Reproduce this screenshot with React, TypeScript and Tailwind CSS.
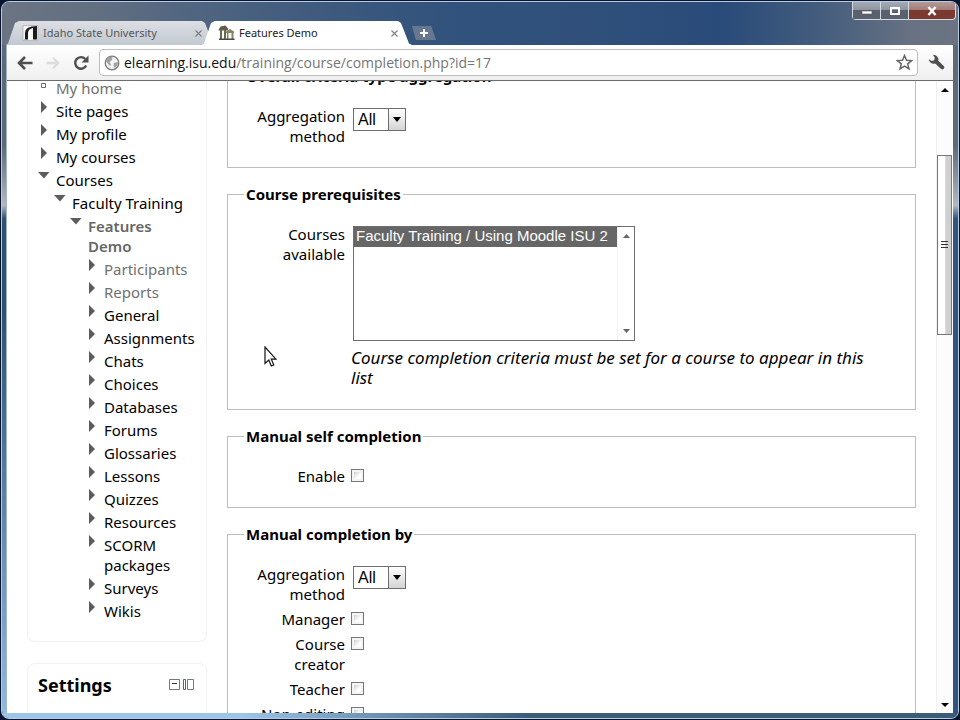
import { useState } from "react";
import type { ReactNode } from "react";

const NAV = [
  { label: "My home", level: 0, kind: "leaf", tone: "dim" },
  { label: "Site pages", level: 0, kind: "closed", tone: "normal" },
  { label: "My profile", level: 0, kind: "closed", tone: "normal" },
  { label: "My courses", level: 0, kind: "closed", tone: "normal" },
  { label: "Courses", level: 0, kind: "open", tone: "normal" },
  { label: "Faculty Training", level: 1, kind: "open", tone: "normal" },
  { label: "Features Demo", level: 2, kind: "open", tone: "current" },
  { label: "Participants", level: 3, kind: "closed", tone: "dim" },
  { label: "Reports", level: 3, kind: "closed", tone: "dim" },
  { label: "General", level: 3, kind: "closed", tone: "normal" },
  { label: "Assignments", level: 3, kind: "closed", tone: "normal" },
  { label: "Chats", level: 3, kind: "closed", tone: "normal" },
  { label: "Choices", level: 3, kind: "closed", tone: "normal" },
  { label: "Databases", level: 3, kind: "closed", tone: "normal" },
  { label: "Forums", level: 3, kind: "closed", tone: "normal" },
  { label: "Glossaries", level: 3, kind: "closed", tone: "normal" },
  { label: "Lessons", level: 3, kind: "closed", tone: "normal" },
  { label: "Quizzes", level: 3, kind: "closed", tone: "normal" },
  { label: "Resources", level: 3, kind: "closed", tone: "normal" },
  { label: "SCORM packages", level: 3, kind: "closed", tone: "normal" },
  { label: "Surveys", level: 3, kind: "closed", tone: "normal" },
  { label: "Wikis", level: 3, kind: "closed", tone: "normal" },
];

const INDENT = ["pl-2.5", "pl-[26px]", "pl-[42px]", "pl-[58px]"];

const TONE: Record<string, string> = {
  normal: "text-black",
  dim: "text-[#707070]",
  current: "text-[#666] font-semibold",
};

function Marker({ kind }: { kind: string }) {
  return (
    <svg width="12" height="12" viewBox="0 0 12 12" className="shrink-0 mr-1.5" fill="#5c5c5c">
      {kind === "closed" && <path d="M3 0v12L9 6z" />}
      {kind === "open" && <path d="M0 2h11.500L6 8.500z" />}
      {kind === "leaf" && <path d="M3.500 5.500h4v4h-4z" fill="#fff" stroke="#6a6a6a" />}
    </svg>
  );
}

function Tab({ title, active, icon }: { title: string; active?: boolean; icon: ReactNode }) {
  return (
    <div
      className={`flex h-6 w-[210px] items-center pl-4 pr-3 [clip-path:polygon(0_100%,2px_94%,9px_8%,13px_0,196px_0,199px_8%,207px_94%,100%_100%)] ${
        active ? "z-10 -ml-[14px] bg-white text-[#222]" : "bg-linear-to-b from-[#dcdfe4] to-[#c3c9d1] text-[#555]"
      }`}
    >
      {icon}
      <span className="ml-1 flex-1 whitespace-nowrap text-[11px]">{title}</span>
      <button aria-label={`Close ${title}`} className="grid size-3 place-items-center">
        <svg width="7" height="7" viewBox="0 0 7 7" stroke="#808080" strokeWidth="1.2">
          <path d="M0.5 0.5l6 6M6.5 0.5l-6 6" />
        </svg>
      </button>
    </div>
  );
}

function TitleBar() {
  return (
    <header className="flex h-[43px] items-start justify-between">
      <div className="flex items-center self-end pl-1">
        <Tab
          title="Idaho State University"
          icon={
            <svg width="17" height="16" viewBox="0 0 17 16">
              <path d="M1 0.5h15v15H1z" fill="#f4f4f4" stroke="#bbb" />
              <path d="M2 14.500h4V8Q6 4 11 3v11.500h4V1Q3 1 3 8v6z" fill="#1c1c1c" />
              <path d="M7 14V8q0-2 2-3v9z" fill="#fff" />
            </svg>
          }
        />
        <Tab
          active
          title="Features Demo"
          icon={
            <svg width="17" height="16" viewBox="0 0 17 16">
              <path d="M0.500 5l2-3.500 5-1L10 3.500v2H0.500z" fill="#5f5d4a" />
              <path d="M2 5h2v9H2zM6 5h2v9H6z" fill="#6b684f" />
              <path d="M8 6.500L12 4l4 2.500V8H8z" fill="#8a8362" />
              <path d="M9 8h1.500v6H9zM13.500 8h2v6h-2z" fill="#8a8362" />
              <path d="M1 13.500h15.500v1.500H1z" fill="#4a4a3c" />
            </svg>
          }
        />
        <button
          aria-label="New tab"
          className="grid h-[14px] w-6 place-items-center bg-[#66788f] [clip-path:polygon(0_0,80%_0,100%_100%,16%_100%)]"
        >
          <svg width="10" height="10" viewBox="0 0 10 10" stroke="#fff" strokeWidth="2">
            <path d="M5 1v8M1 5h8" />
          </svg>
        </button>
      </div>
      <div className="mr-0.5 flex h-[18px] rounded-b border border-t-0 border-[#d5dae2]">
        <button
          aria-label="Minimize"
          className="grid w-7 place-items-center border-r border-[#d5dae2] bg-linear-to-b from-[#a5abb5] via-[#8d939e] via-50% to-[#59616e] to-50%"
        >
          <svg width="12" height="10" viewBox="0 0 12 10">
            <path d="M1 5h10v3H1z" fill="#fff" stroke="#555" strokeWidth="0.6" />
          </svg>
        </button>
        <button
          aria-label="Maximize"
          className="grid w-7 place-items-center border-r border-[#d5dae2] bg-linear-to-b from-[#a5abb5] via-[#8d939e] via-50% to-[#59616e] to-50%"
        >
          <svg width="12" height="10" viewBox="0 0 12 10" fill="none" stroke="#fff" strokeWidth="2">
            <path d="M2 2h8v6H2z" />
          </svg>
        </button>
        <button
          aria-label="Close"
          className="grid w-[46px] place-items-center rounded-br bg-linear-to-b from-[#b59a98] via-[#a07a76] via-50% to-[#7a3a30] to-50%"
        >
          <svg width="12" height="10" viewBox="0 0 12 10" stroke="#fff" strokeWidth="2.4">
            <path d="M2.5 1l7 8M9.5 1l-7 8" />
          </svg>
        </button>
      </div>
    </header>
  );
}

function Toolbar() {
  return (
    <div className="flex h-9 shrink-0 items-center border-b border-[#6b6b6b] bg-linear-to-b from-white to-[#efefef] pl-2 pr-2">
      <button aria-label="Back" className="grid w-5 place-items-center">
        <svg width="16" height="14" viewBox="0 0 16 14" fill="none" stroke="#4f4f4f" strokeWidth="2.6">
          <path d="M15.5 7H2.5M8 1L2 7l6 6" />
        </svg>
      </button>
      <button aria-label="Forward" className="ml-2 grid w-5 place-items-center">
        <svg width="14" height="14" viewBox="0 0 16 14" fill="none" stroke="#dcdcdc" strokeWidth="2.6">
          <path d="M0.5 7h13M8 1l6 6-6 6" />
        </svg>
      </button>
      <button aria-label="Reload" className="ml-2 grid w-5 place-items-center">
        <svg width="16" height="16" viewBox="0 0 16 16" fill="none" stroke="#4f4f4f" strokeWidth="2.4">
          <path d="M13.2 10.5A5.8 5.8 0 1 1 12.3 4" />
          <path d="M15.5 0.5v7h-7z" fill="#4f4f4f" stroke="none" />
        </svg>
      </button>
      <div className="ml-2 flex h-[27px] flex-1 items-center rounded border border-[#bdbdbd] bg-white px-1">
        <svg width="16" height="16" viewBox="0 0 16 16" className="shrink-0">
          <circle cx="8" cy="8" r="6.8" fill="#f4f4f4" stroke="#7b7b7b" strokeWidth="1.3" />
          <path d="M3 3.5q3-2.5 5.500-1.500L8 5 5.500 7 7 9.500 6 11 2 6.500zM10 8l3.500-1 0.500 2-3 4-1.500-2z" fill="#a2a2a2" />
        </svg>
        <div className="ml-1 flex-1 whitespace-nowrap font-['Open_Sans',sans-serif] text-[14px] text-[#757575]">
          <span className="text-[#111]">elearning.isu.edu</span>/training/course/completion.php?id=17
        </div>
        <button aria-label="Bookmark this page">
          <svg width="17" height="17" viewBox="0 0 17 17" fill="#fff" stroke="#666" strokeWidth="1.500">
            <path d="M8.500 1.500l2 4.700 5.200 0.400-4 3.300 1.300 5.100-4.500-2.800-4.500 2.800 1.300-5.100-4-3.300 5.200-0.400z" />
          </svg>
        </button>
      </div>
      <button aria-label="Customize and control" className="ml-2.5">
        <svg width="17" height="17" viewBox="0 0 17 17">
          <path
            d="M5 0.800a5 5 0 0 1 5.300 6L16 12.200q0.900 1.200-0.300 2.500t-2.600 0.300L7.200 9.500A5 5 0 0 1 0.700 5.300l3 1.700 2.500-0.800 0.600-2.500z"
            fill="#4f4f4f"
          />
        </svg>
      </button>
    </div>
  );
}

function Sidebar() {
  return (
    <aside className="w-[180px] shrink-0">
      <nav className="rounded-b-lg border border-t-0 border-[#f1f1f1] pb-[17px]">
        <ul>
          {NAV.map((n) => (
            <li key={n.label} className={`mb-[3px] flex pr-3 ${INDENT[n.level]}`}>
              <Marker kind={n.kind} />
              <a href="#" className={TONE[n.tone]}>
                {n.label}
              </a>
            </li>
          ))}
        </ul>
      </nav>
      <section className="mt-[21px] flex h-24 items-start justify-between rounded-t-lg border border-[#f1f1f1] py-[7px] pl-2.5 pr-3">
        <h2 className="text-[18px] leading-7 font-bold">Settings</h2>
        <div className="mt-2 flex gap-[3px]">
          <button aria-label="Hide Settings block">
            <svg width="11" height="11" viewBox="0 0 11 11" fill="none" stroke="#777">
              <path d="M0.500 0.500h10v10H0.500z" />
              <path d="M3 4.500h5" stroke="#333" />
            </svg>
          </button>
          <button aria-label="Dock Settings block">
            <svg width="11" height="11" viewBox="0 0 11 11" fill="none">
              <path d="M0.500 0.500h2v10h-2z" stroke="#3d7285" />
              <path d="M4.500 0.500h6v10h-6z" stroke="#777" />
            </svg>
          </button>
        </div>
      </section>
    </aside>
  );
}

function Group({ title, children }: { title: string; children: ReactNode }) {
  return (
    <fieldset className="mb-4 border border-[#bdbdbd] px-4 pt-5 pb-4">
      <legend className="px-0.5 font-bold">{title}</legend>
      {children}
    </fieldset>
  );
}

function Row({ id, label, children }: { id: string; label: string; children: ReactNode }) {
  return (
    <div className="mb-[5px] flex items-start">
      <label htmlFor={id} className="mr-1.5 w-[101px] shrink-0 text-right">
        {label}
      </label>
      {children}
    </div>
  );
}

function MethodSelect({ id }: { id: string }) {
  return (
    <div className="relative mt-0.5 ml-0.5">
      <select
        id={id}
        className="block h-[23px] w-[53px] appearance-none border border-[#6e6e6e] bg-white pl-1 font-['Liberation_Sans',sans-serif] text-[16px] leading-5"
      >
        <option>All</option>
        <option>Any</option>
      </select>
      <span className="pointer-events-none absolute inset-y-0 right-0 grid w-[18px] place-items-center border border-[#6e6e6e] bg-linear-to-b from-white to-[#d4d4d4]">
        <svg width="8" height="5" viewBox="0 0 8 5">
          <path d="M0 0h8L4 5z" />
        </svg>
      </span>
    </div>
  );
}

function Check({ id, label }: { id: string; label: string }) {
  return (
    <Row id={id} label={label}>
      <input
        id={id}
        type="checkbox"
        className="mt-[3px] size-[13px] appearance-none border border-[#777] bg-linear-to-br from-[#bbb] to-white to-60% shadow-[inset_0_0_0_2px_#f4f4f4] checked:from-[#555]"
      />
    </Row>
  );
}

function CompletionForm() {
  const [picked, setPicked] = useState(["using-moodle"]);
  return (
    <form className="-mt-[15px] mr-5 ml-5 min-w-0 flex-1">
      <Group title="Overall criteria type aggregation">
        <Row id="overall" label="Aggregation method">
          <MethodSelect id="overall" />
        </Row>
      </Group>
      <Group title="Course prerequisites">
        <Row id="courses" label="Courses available">
          <div className="min-w-0 flex-1">
            <div className="mt-0.5 ml-0.5 flex h-[115px] w-[282px] border border-[#6e6e6e] bg-white">
              <select
                id="courses"
                multiple
                value={picked}
                onChange={(e) => setPicked(Array.from(e.target.selectedOptions, (o) => o.value))}
                className="flex-1 appearance-none overflow-hidden font-['Liberation_Sans',sans-serif] text-[15px] outline-none"
              >
                <option
                  value="using-moodle"
                  className="h-5 px-0.5 py-0 leading-5 checked:bg-linear-to-r checked:from-[#666] checked:to-[#666] checked:[-webkit-text-fill-color:#fff]"
                >
                  Faculty Training / Using Moodle ISU 2
                </option>
              </select>
              <div className="flex w-[17px] flex-col items-center justify-between border-l border-[#f2f2f2] py-[7px]">
                <svg width="7" height="4" viewBox="0 0 7 4" fill="#666">
                  <path d="M0 4h7L3.500 0z" />
                </svg>
                <svg width="7" height="4" viewBox="0 0 7 4" fill="#666">
                  <path d="M0 0h7L3.500 4z" />
                </svg>
              </div>
            </div>
            <p className="mt-[7px] max-w-[520px] text-[17px] leading-5 italic">
              Course completion criteria must be set for a course to appear in this list
            </p>
          </div>
        </Row>
      </Group>
      <Group title="Manual self completion">
        <Check id="self" label="Enable" />
      </Group>
      <Group title="Manual completion by">
        <Row id="roles" label="Aggregation method">
          <MethodSelect id="roles" />
        </Row>
        <Check id="manager" label="Manager" />
        <Check id="creator" label="Course creator" />
        <Check id="teacher" label="Teacher" />
        <Check id="nonediting" label="Non-editing teacher" />
      </Group>
    </form>
  );
}

function PageScrollbar() {
  return (
    <div className="flex w-[17px] shrink-0 flex-col items-center border-l border-[#efefef] bg-[#fcfcfc] pt-[7px] pb-1.5">
      <svg width="8" height="4" viewBox="0 0 8 4">
        <path d="M0 4h8L4 0z" />
      </svg>
      <div className="mt-[63px] mr-0.5 grid h-[180px] w-[15px] place-items-center border border-[#777] bg-linear-to-r from-white from-50% to-[#cfcfcf] to-60%">
        <svg width="7" height="8" viewBox="0 0 7 8" stroke="#333">
          <path d="M0 0.500h7M0 3.500h7M0 6.500h7" />
        </svg>
      </div>
      <svg width="8" height="4" viewBox="0 0 8 4" className="mt-auto">
        <path d="M0 0h8L4 4z" />
      </svg>
    </div>
  );
}

export default function App() {
  return (
    <div className="relative flex h-screen flex-col bg-[#081430] p-px font-['Noto_Sans',sans-serif] text-[15px] leading-5 text-black">
      <div className="flex min-h-0 flex-1 flex-col overflow-hidden rounded-lg border border-[#b9cbe0] bg-linear-to-r from-[#6f7a89] via-[#35557f] to-[#35557f]">
        <div className="bg-linear-to-r from-[#6b7482] via-[#3a5b80] via-50% to-[#6c7482]">
          <div className="bg-linear-to-r from-transparent from-10% via-[#294b79] via-75% to-transparent to-95%">
            <TitleBar />
          </div>
        </div>
        <div className="flex min-h-0 flex-1">
          <div className="w-[5px] shrink-0 border-r border-[#9fb4c8] bg-linear-to-b from-[#5f6a78] from-15% via-[#b4b8bf] via-24% to-[#2f5270] to-26%">
            <div className="h-full bg-linear-to-b from-transparent from-40% to-[#8fbbdf]" />
          </div>
          <div className="flex min-w-0 flex-1 flex-col bg-white">
            <Toolbar />
            <div className="flex min-h-0 flex-1 overflow-hidden">
              <div className="-mt-[3px] ml-5 shrink-0">
                <Sidebar />
              </div>
              <CompletionForm />
              <PageScrollbar />
            </div>
          </div>
          <div className="w-[5px] shrink-0 bg-linear-to-b from-[#5f6a78] from-15% via-[#b4b8bf] via-24% to-[#33547c] to-26%" />
        </div>
        <div className="h-[5px] shrink-0 bg-linear-to-r from-[#9cc5e8] from-25% to-[#3c5d78] to-55%" />
      </div>
      <svg width="13" height="21" viewBox="0 0 13 21" className="pointer-events-none absolute top-[346px] left-[264px]">
        <path d="M1 1v16.500l3.800-3.500 2.500 6 2.500-1-2.500-5.800H12z" fill="#fff" stroke="#111" strokeWidth="1.200" />
      </svg>
    </div>
  );
}
